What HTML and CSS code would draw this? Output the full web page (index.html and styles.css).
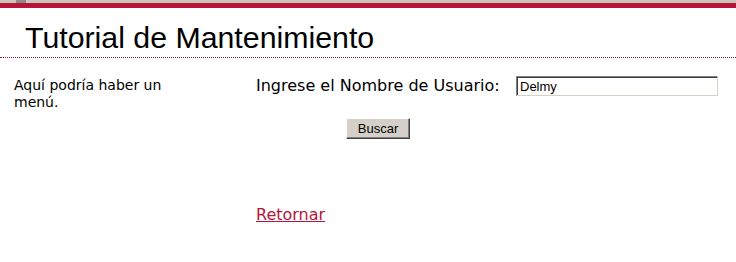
FILE: index.html
```html
<!DOCTYPE html>
<html lang="es">
<head>
  <meta charset="UTF-8">
  <title>Tutorial de Mantenimiento</title>
  <link rel="stylesheet" href="styles.css">
</head>
<body>
  <div class="topbar"><span class="grip"></span></div>
  <div class="redbar"></div>
  <div class="header">
    <h1>Tutorial de Mantenimiento</h1>
  </div>
  <div class="content">
    <div class="sidebar">
      <p>Aquí podría haber un menú.</p>
    </div>
    <div class="main">
      <form class="search-form">
        <label for="usuario">Ingrese el Nombre de Usuario:</label>
        <input type="text" id="usuario" value="Delmy">
        <div class="btn-cell">
          <button type="button" class="btn">Buscar</button>
        </div>
      </form>
      <a href="#" class="back-link">Retornar</a>
    </div>
  </div>
</body>
</html>
```

FILE: styles.css
```css
* {
  margin: 0;
  padding: 0;
  box-sizing: border-box;
}

body {
  font-family: 'DejaVu Sans', Verdana, sans-serif;
  background: #fff;
  color: #000;
}

.topbar {
  height: 3px;
  background: #c9c5bb;
  position: relative;
}

.grip {
  position: absolute;
  left: 16px;
  top: 0;
  width: 10px;
  height: 3px;
  background: #8c8a86;
}

.redbar {
  height: 5px;
  background: #b5153b;
}

.header {
  height: 50px;
  border-bottom: 1px dotted #8a1a35;
  padding-left: 25px;
  padding-top: 12px;
}

h1 {
  font-family: 'Liberation Sans', Arial, sans-serif;
  font-weight: normal;
  font-size: 30.3px;
  line-height: 36px;
}

.content {
  display: flex;
}

.sidebar {
  width: 256px;
  padding: 19px 0 0 14px;
}

.sidebar p {
  width: 190px;
  font-size: 14px;
  line-height: 17px;
}

.main {
  flex: 1;
  padding-top: 18px;
}

.search-form {
  display: grid;
  grid-template-columns: 260px 202px;
  row-gap: 22px;
  align-items: center;
}

label {
  font-size: 16px;
  line-height: 20px;
}

input[type="text"] {
  width: 202px;
  height: 20px;
  border: 1px solid #7f7f7f;
  border-color: #7f7f7f #d4d0c8 #d4d0c8 #7f7f7f;
  box-shadow: inset 1px 1px 0 #404040;
  font-family: 'Liberation Sans', Arial, sans-serif;
  font-size: 13px;
  padding: 0 3px;
  background: #fff;
}

.btn-cell {
  text-align: center;
  padding-right: 16px;
}

.btn {
  width: 64px;
  height: 21px;
  background: #d4d0c8;
  border: 1px solid;
  border-color: #fff #404040 #404040 #fff;
  box-shadow: inset -1px -1px 0 #808080;
  font-family: 'Liberation Sans', Arial, sans-serif;
  font-size: 13px;
  color: #000;
}

.back-link {
  display: inline-block;
  margin-top: 66px;
  font-size: 16px;
  color: #b5153b;
}
```
